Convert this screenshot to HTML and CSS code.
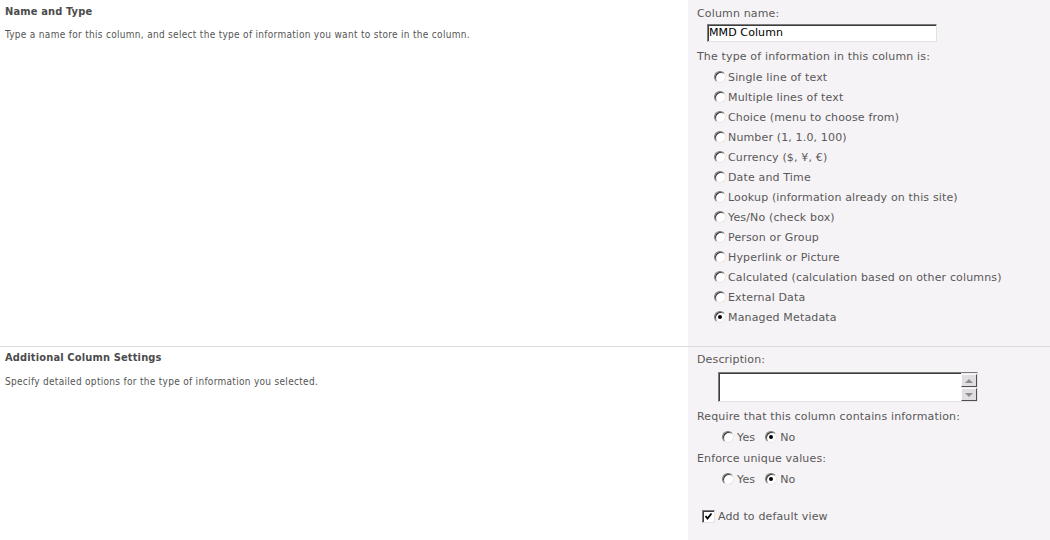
FILE: index.html
```html
<!DOCTYPE html>
<html lang="en">
<head>
<meta charset="utf-8">
<title>Create Column</title>
<link rel="stylesheet" href="styles.css">
</head>
<body>
<div class="page">
  <section class="row row-first">
    <div class="desc-col">
      <h3 class="title">Name and Type</h3>
      <p class="help">Type a name for this column, and select the type of information you want to store in the column.</p>
    </div>
    <div class="ctl-col">
      <div class="label">Column name:</div>
      <div class="textbox">MMD Column</div>
      <div class="label gap-4">The type of information in this column is:</div>
      <ul class="choices">
        <li class="choice"><span class="radio"></span>Single line of text</li>
        <li class="choice"><span class="radio"></span>Multiple lines of text</li>
        <li class="choice"><span class="radio"></span>Choice (menu to choose from)</li>
        <li class="choice"><span class="radio"></span>Number (1, 1.0, 100)</li>
        <li class="choice"><span class="radio"></span>Currency ($, ¥, €)</li>
        <li class="choice"><span class="radio"></span>Date and Time</li>
        <li class="choice"><span class="radio"></span>Lookup (information already on this site)</li>
        <li class="choice"><span class="radio"></span>Yes/No (check box)</li>
        <li class="choice"><span class="radio"></span>Person or Group</li>
        <li class="choice"><span class="radio"></span>Hyperlink or Picture</li>
        <li class="choice"><span class="radio"></span>Calculated (calculation based on other columns)</li>
        <li class="choice"><span class="radio"></span>External Data</li>
        <li class="choice"><span class="radio on"></span>Managed Metadata</li>
      </ul>
    </div>
  </section>
  <section class="row row-second">
    <div class="desc-col">
      <h3 class="title">Additional Column Settings</h3>
      <p class="help">Specify detailed options for the type of information you selected.</p>
    </div>
    <div class="ctl-col">
      <div class="label">Description:</div>
      <div class="textarea">
        <div class="textarea-body"></div>
        <div class="scrollbar">
          <span class="sb-btn"><span class="arrow-up"></span></span>
          <span class="sb-btn"><span class="arrow-down"></span></span>
        </div>
      </div>
      <div class="label gap-4">Require that this column contains information:</div>
      <div class="yesno">
        <span class="radio"></span><span class="yn-text">Yes</span>
        <span class="radio on"></span><span class="yn-text">No</span>
      </div>
      <div class="label gap-1">Enforce unique values:</div>
      <div class="yesno">
        <span class="radio"></span><span class="yn-text">Yes</span>
        <span class="radio on"></span><span class="yn-text">No</span>
      </div>
      <div class="checkrow">
        <span class="checkbox"><svg width="9" height="9" viewBox="0 0 9 9"><polyline points="1.5,4 3.5,6.5 7.5,1.5" fill="none" stroke="#000" stroke-width="1.8"/></svg></span>
        <span class="check-text">Add to default view</span>
      </div>
    </div>
  </section>
</div>
</body>
</html>
```

FILE: styles.css
```css
html, body {
  margin: 0;
  padding: 0;
  background: #ffffff;
}

.page {
  width: 1050px;
  height: 540px;
  overflow: hidden;
  display: flex;
  flex-direction: column;
}

.row {
  display: grid;
  grid-template-columns: 688px 1fr;
}

.row-first {
  height: 346px;
}

.row-second {
  flex: 1;
  border-top: 1px solid #dddbdd;
}

.desc-col {
  padding: 5px 0 0 5px;
  font-family: "DejaVu Sans Condensed", "DejaVu Sans", sans-serif;
  color: #4c4c4c;
}

.row-second .desc-col {
  padding-top: 4px;
}

.title {
  margin: 0;
  font-size: 11px;
  line-height: 14px;
  letter-spacing: 0.15px;
  font-weight: bold;
  color: #4c4c4c;
}

.help {
  margin: 9px 0 0;
  font-size: 10px;
  line-height: 14px;
  letter-spacing: 0.3px;
  color: #555555;
}

.row-second .help {
  margin-top: 10px;
}

.ctl-col {
  background: #f6f3f6;
  padding: 3px 0 0 9px;
  font-family: "DejaVu Sans", sans-serif;
  font-size: 11px;
  letter-spacing: 0.15px;
  color: #585858;
}

.row-second .ctl-col {
  padding-top: 2px;
}

.label {
  padding-top: 1px;
  line-height: 20px;
  white-space: nowrap;
}

.gap-4 { margin-top: 4px; }
.gap-1 { margin-top: 1px; }

.textbox {
  box-sizing: border-box;
  width: 230px;
  height: 18px;
  margin-left: 10px;
  padding-left: 1px;
  background: #ffffff;
  border: 1px solid;
  border-color: #7c7c7c #e2e2e2 #e2e2e2 #7c7c7c;
  box-shadow: inset 1px 1px 0 #3c3c3c;
  color: #000000;
  line-height: 16px;
  letter-spacing: 0.1px;
}

.choices {
  list-style: none;
  margin: 0;
  padding: 0 0 0 17px;
}

.choice {
  display: flex;
  align-items: center;
  height: 20px;
  white-space: nowrap;
}

.radio {
  position: relative;
  box-sizing: border-box;
  flex: none;
  display: inline-block;
  width: 12px;
  height: 12px;
  margin-right: 2px;
  border-radius: 50%;
  background: #ffffff;
  border: 1px solid;
  border-color: #7a7a7a #e8e8e8 #e8e8e8 #7a7a7a;
  box-shadow: inset 1px 1px 0 #3a3a3a;
}

.radio.on::after {
  content: "";
  position: absolute;
  left: 3px;
  top: 3px;
  width: 4px;
  height: 4px;
  border-radius: 50%;
  background: #000000;
}

.textarea {
  box-sizing: border-box;
  display: flex;
  width: 260px;
  height: 30px;
  margin: 2px 0 0 21px;
  background: #ffffff;
  border: 1px solid;
  border-color: #7c7c7c #e2e2e2 #e2e2e2 #7c7c7c;
  box-shadow: inset 1px 1px 0 #3c3c3c;
}

.textarea-body {
  flex: 1;
}

.scrollbar {
  display: flex;
  flex-direction: column;
  justify-content: space-between;
  width: 16px;
  padding: 1px 0 0;
  background: #efedef;
}

.sb-btn {
  box-sizing: border-box;
  display: flex;
  align-items: center;
  justify-content: center;
  height: 13px;
  background: #e0dee0;
  border: 1px solid;
  border-color: #fafafa #505050 #505050 #fafafa;
}

.arrow-up {
  width: 0;
  height: 0;
  border-left: 4px solid transparent;
  border-right: 4px solid transparent;
  border-bottom: 4px solid #8e8e8e;
}

.arrow-down {
  width: 0;
  height: 0;
  border-left: 4px solid transparent;
  border-right: 4px solid transparent;
  border-top: 4px solid #8e8e8e;
}

.yesno {
  display: flex;
  align-items: center;
  height: 20px;
  padding-left: 25px;
}

.yesno .radio {
  margin-right: 3px;
}

.yn-text {
  margin-right: 10px;
}

.checkrow {
  display: flex;
  align-items: center;
  height: 20px;
  margin-top: 17px;
  padding-left: 5px;
}

.checkbox {
  box-sizing: border-box;
  display: flex;
  align-items: center;
  justify-content: center;
  width: 13px;
  height: 13px;
  margin-right: 3px;
  background: #ffffff;
  border: 1px solid;
  border-color: #7c7c7c #e2e2e2 #e2e2e2 #7c7c7c;
  box-shadow: inset 1px 1px 0 #3c3c3c;
}

.check-text {
  white-space: nowrap;
}
```
